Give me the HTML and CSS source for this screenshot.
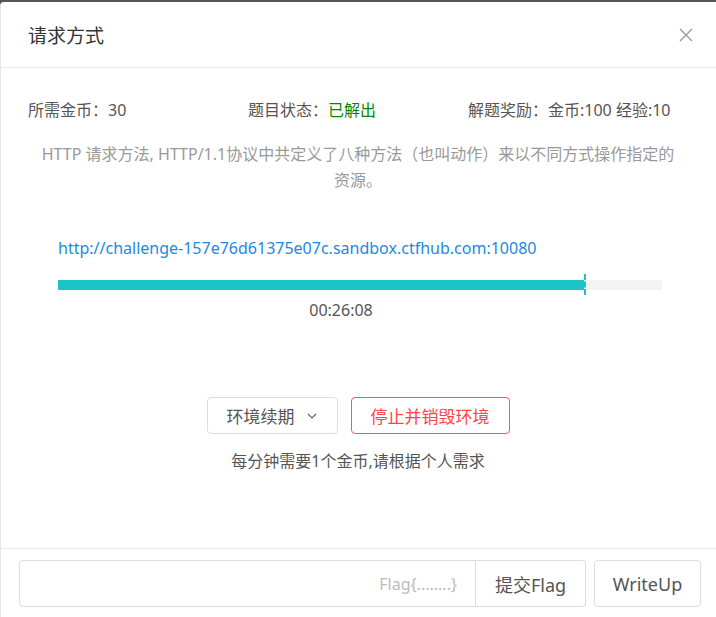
FILE: index.html
```html
<!DOCTYPE html>
<html lang="zh-CN">
<head>
    <meta charset="UTF-8">
    <title>请求方式</title>
    <link rel="stylesheet" href="styles.css">
</head>
<body>
    <div class="modal">
        <div class="modal-header">
            <span class="modal-title">请求方式</span>
            <span class="modal-close">
                <svg width="16" height="16" viewBox="0 0 16 16"><path d="M2 2L14 14M14 2L2 14" stroke="#999" stroke-width="1.4" fill="none"/></svg>
            </span>
        </div>
        <div class="modal-body">
            <div class="info-row">
                <div class="info-col">所需金币：30</div>
                <div class="info-col">题目状态：<span class="solved">已解出</span></div>
                <div class="info-col">解题奖励：金币:100 经验:10</div>
            </div>
            <p class="desc">HTTP 请求方法, HTTP/1.1协议中共定义了八种方法（也叫动作）来以不同方式操作指定的<span class="nowrap">资源。</span></p>
            <a class="env-url" href="#">http://challenge-157e76d61375e07c.sandbox.ctfhub.com:10080</a>
            <div class="progress">
                <div class="progress-fill" style="width: 87.1%"></div>
                <div class="progress-mark"></div>
            </div>
            <div class="time-left">00:26:08</div>
            <div class="actions">
                <button class="btn">环境续期
                    <svg width="12" height="12" viewBox="0 0 12 12"><path d="M2 4L6 8L10 4" stroke="#666" stroke-width="1.1" fill="none"/></svg>
                </button>
                <button class="btn btn-danger">停止并销毁环境</button>
            </div>
            <div class="note">每分钟需要1个金币,请根据个人需求</div>
        </div>
        <div class="modal-footer">
            <div class="flag-group">
                <input type="text" class="flag-input" placeholder="Flag{........}">
                <button class="flag-btn">提交Flag</button>
            </div>
            <button class="writeup-btn">WriteUp</button>
        </div>
    </div>
</body>
</html>
```

FILE: styles.css
```css
body {
    margin: 0;
    padding: 0;
    background-color: #555;
    font-family: "Noto Sans", "Noto Sans CJK SC", sans-serif;
    color: #555;
    overflow: hidden;
}
.modal {
    margin-top: 2px;
    height: 615px;
    background-color: #fff;
    border-left: 1px solid #e6e6e6;
    border-radius: 4px 0 0 0;
    display: flex;
    flex-direction: column;
}
.modal-header {
    height: 65px;
    padding: 0 22px 0 27px;
    display: flex;
    align-items: center;
    justify-content: space-between;
    border-bottom: 1px solid #e8e8e8;
}
.modal-title {
    font-size: 19px;
    color: #333;
}
.modal-close {
    display: flex;
}
.modal-body {
    flex: 1;
    padding: 30px 28px 0 27px;
}
.info-row {
    display: flex;
    font-size: 16px;
    line-height: 24px;
}
.info-col {
    flex: 1;
}
.solved {
    color: #080;
}
.desc {
    margin: 19px 0 0;
    font-size: 16px;
    line-height: 26px;
    color: #999;
    text-align: center;
}
.nowrap {
    white-space: nowrap;
}
.env-url {
    display: block;
    margin: 43px 0 0 30px;
    font-size: 16px;
    line-height: 24px;
    color: #1e88e5;
    text-decoration: none;
}
.progress {
    position: relative;
    margin: 20px 26px 0 30px;
    height: 10px;
    background-color: #f3f3f3;
}
.progress-fill {
    height: 100%;
    background-color: #19c4c4;
}
.progress-mark {
    position: absolute;
    left: 87.1%;
    top: -6px;
    bottom: -5px;
    border-left: 2px dashed #19c4c4;
}
.time-left {
    margin-top: 10px;
    padding-right: 34px;
    text-align: center;
    font-size: 16px;
    line-height: 20px;
}
.actions {
    margin-top: 77px;
    display: flex;
    justify-content: center;
    gap: 13px;
}
.btn {
    height: 37px;
    padding: 0 19px;
    font-family: inherit;
    font-size: 17px;
    color: #555;
    background-color: #fff;
    border: 1px solid #ddd;
    border-radius: 4px;
    display: flex;
    align-items: center;
    gap: 11px;
}
.btn-danger {
    color: #f44;
    border-color: #f55;
}
.note {
    margin-top: 16px;
    text-align: center;
    font-size: 16px;
    line-height: 22px;
}
.modal-footer {
    border-top: 1px solid #e8e8e8;
    padding: 11px 15px 0 18px;
    height: 57px;
    display: flex;
    gap: 8px;
}
.flag-group {
    flex: 1;
    display: flex;
    height: 47px;
}
.flag-input {
    flex: 1;
    min-width: 0;
    border: 1px solid #ddd;
    border-radius: 4px 0 0 4px;
    padding: 0 18px;
    text-align: right;
    font-family: inherit;
    font-size: 16px;
    outline: none;
}
.flag-input::placeholder {
    color: #bbb;
}
.flag-btn, .writeup-btn {
    height: 47px;
    padding: 0 17px;
    font-family: inherit;
    font-size: 18px;
    color: #555;
    background-color: #fff;
    border: 1px solid #ddd;
}
.flag-btn {
    border-left: none;
    border-radius: 0 4px 4px 0;
    width: 110px;
}
.writeup-btn {
    border-radius: 4px;
    width: 107px;
}
```
